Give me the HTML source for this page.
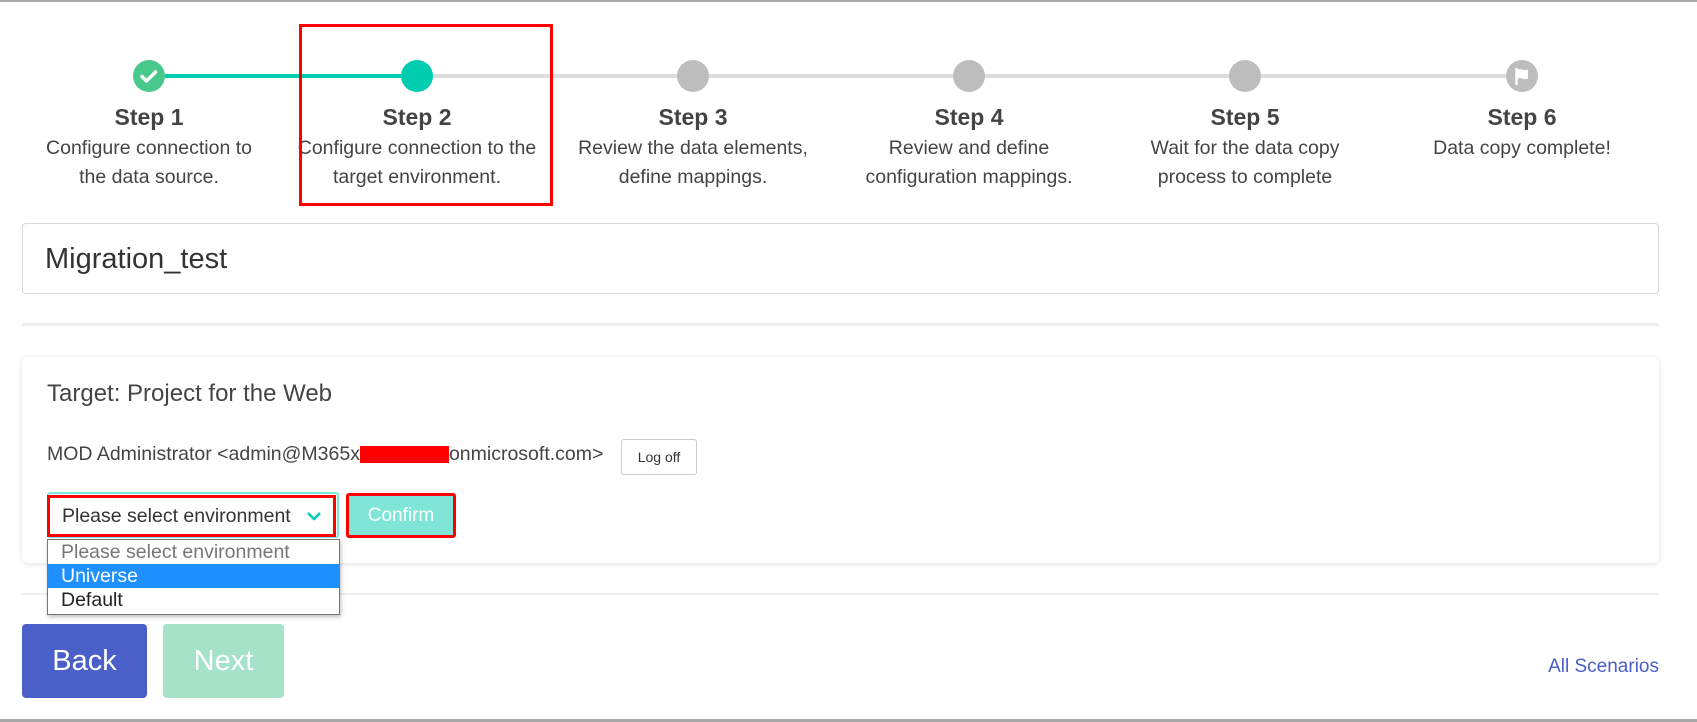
<!DOCTYPE html>
<html><head><meta charset="utf-8"><style>
*{box-sizing:border-box;margin:0;padding:0}
body{width:1697px;height:722px;background:#fff;font-family:"Liberation Sans",Arial,sans-serif;color:#333;position:relative;overflow:hidden}
.abs{position:absolute}
.topline{left:0;top:0;width:1697px;height:2px;background:#a8a8a8}
.botline{left:0;top:719px;width:1697px;height:3px;background:#a8a8a8}
.line{height:4px;top:74px}
.dot{width:32px;height:32px;border-radius:50%;top:60px;background:#bdbdbd}
.step{width:300px;text-align:center;top:103px}
.step b{display:block;font-size:23px;color:#444;line-height:28px}
.step p{font-size:19.5px;line-height:29px;color:#444;margin-top:3px}
.red{border:3px solid #f00}
</style></head><body>
<div class="abs topline"></div>
<div class="abs line" style="left:165px;width:236px;background:#00cdb0"></div>
<div class="abs line" style="left:433px;width:1073px;background:#ddd"></div>
<div class="abs dot" style="left:133px;background:#48c98b"><svg width="32" height="32" viewBox="0 0 32 32"><path d="M9 16.5l4.5 4.5 9-9" stroke="#fff" stroke-width="3.5" fill="none" stroke-linecap="round" stroke-linejoin="round"/></svg></div>
<div class="abs dot" style="left:401px;background:#00cdb0"></div>
<div class="abs dot" style="left:677px"></div>
<div class="abs dot" style="left:953px"></div>
<div class="abs dot" style="left:1229px"></div>
<div class="abs dot" style="left:1506px"><svg width="32" height="32" viewBox="0 0 32 32"><path d="M10.5 9v15" stroke="#fff" stroke-width="2.5" stroke-linecap="round"/><path d="M10.5 10c4-2.5 7 1.5 11.5-0.5v9c-4.5 2-7.5-2-11.5 0.5z" fill="#fff"/></svg></div>
<div class="abs step" style="left:-1px"><b>Step 1</b><p>Configure connection to<br>the data source.</p></div>
<div class="abs step" style="left:267px"><b>Step 2</b><p>Configure connection to the<br>target environment.</p></div>
<div class="abs step" style="left:543px"><b>Step 3</b><p>Review the data elements,<br>define mappings.</p></div>
<div class="abs step" style="left:819px"><b>Step 4</b><p>Review and define<br>configuration mappings.</p></div>
<div class="abs step" style="left:1095px"><b>Step 5</b><p>Wait for the data copy<br>process to complete</p></div>
<div class="abs step" style="left:1372px"><b>Step 6</b><p>Data copy complete!</p></div>
<div class="abs red" style="left:299px;top:24px;width:254px;height:182px"></div>
<div class="abs" style="left:22px;top:223px;width:1637px;height:71px;border:1px solid #d8d8d8;border-radius:4px;font-size:29px;padding:19px 0 0 22px;color:#333">Migration_test</div>
<div class="abs" style="left:22px;top:323px;width:1637px;height:3px;background:#eee"></div>
<div class="abs" style="left:22px;top:357px;width:1637px;height:206px;border-radius:6px;box-shadow:0 1px 6px rgba(0,0,0,.12);background:#fff"></div>
<div class="abs" style="left:47px;top:380px;font-size:24px;color:#444">Target: Project for the Web</div>
<div class="abs" style="left:47px;top:443px;font-size:19.5px;color:#444">MOD Administrator &lt;admin@M365x<span style="display:inline-block;width:89px;height:17px;background:#f00;vertical-align:-3px"></span>onmicrosoft.com&gt;</div>
<div class="abs" style="left:621px;top:439px;width:76px;height:36px;border:1px solid #ccc;border-radius:3px;font-size:14px;text-align:center;line-height:34px;color:#333">Log off</div>
<div class="abs" style="left:47px;top:492px;width:292px;height:46px;border:2px solid #7ee5d7;border-radius:3px"></div>
<div class="abs red" style="left:47px;top:495px;width:289px;height:42px;font-size:19.5px;color:#333;padding:7px 0 0 12px;white-space:nowrap">Please select environment<svg class="abs" style="left:256px;top:12px" width="16" height="12" viewBox="0 0 16 12"><path d="M2 3l6 6 6-6" stroke="#00cdb0" stroke-width="2.5" fill="none"/></svg></div>
<div class="abs" style="left:346px;top:493px;width:110px;height:45px;background:#7ee5d7;border:3px solid #f00;border-radius:3px;color:#fff;font-size:19px;text-align:center;line-height:39px">Confirm</div>
<div class="abs" style="left:22px;top:593px;width:1637px;height:2px;background:#eee"></div>
<div class="abs" style="left:47px;top:539px;width:293px;height:76px;border:1px solid #777;background:#fff;box-shadow:1px 2px 4px rgba(0,0,0,.25);font-size:19.5px;line-height:24px;white-space:nowrap">
<div style="color:#777;padding-left:13px">Please select environment</div>
<div style="background:#1e90ff;color:#fff;padding-left:13px">Universe</div>
<div style="color:#222;padding-left:13px">Default</div></div>
<div class="abs" style="left:22px;top:624px;width:125px;height:74px;background:#4a5fc7;border-radius:4px;color:#fff;font-size:29px;text-align:center;line-height:74px">Back</div>
<div class="abs" style="left:163px;top:624px;width:121px;height:74px;background:#a4e3c8;border-radius:4px;color:#fff;font-size:29px;text-align:center;line-height:74px">Next</div>
<div class="abs" style="right:38px;top:656px;font-size:19px;color:#4a5fc7">All Scenarios</div>
<div class="abs botline"></div>
</body></html>
